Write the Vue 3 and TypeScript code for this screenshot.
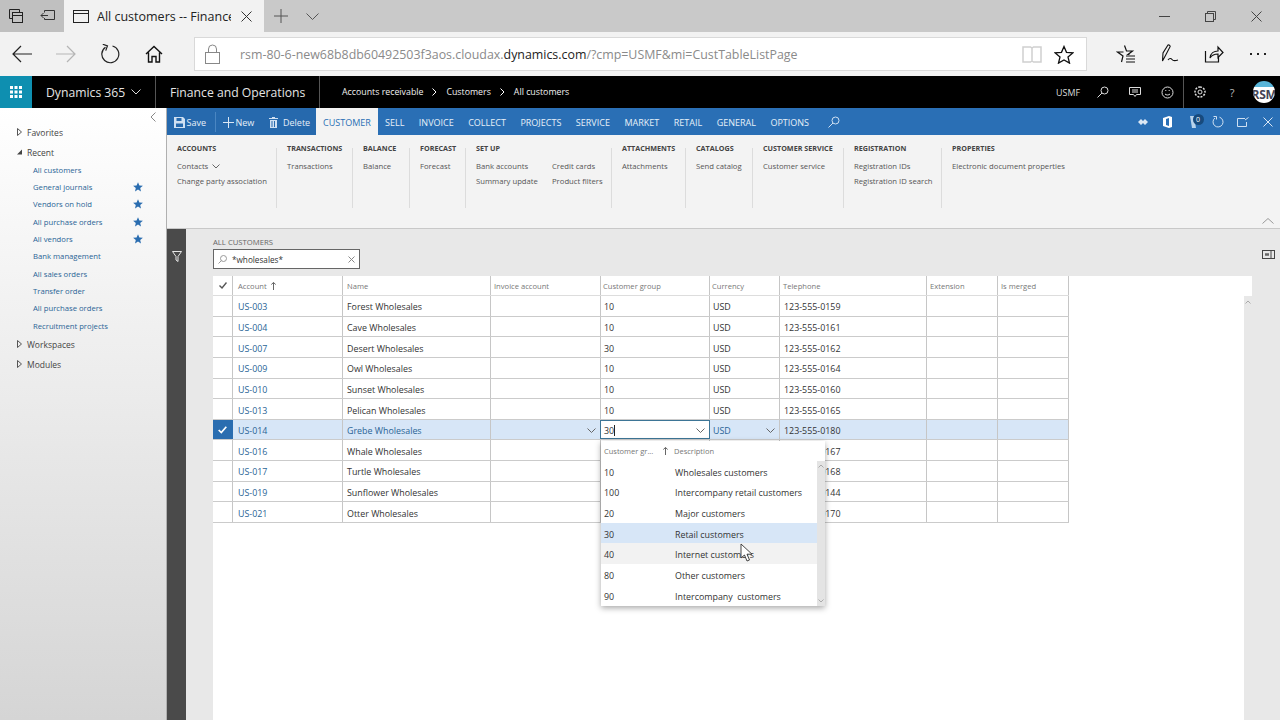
<script setup lang="ts">
const tabs = ['SELL','INVOICE','COLLECT','PROJECTS','SERVICE','MARKET','RETAIL','GENERAL','OPTIONS']
const recent = [
  ['All customers',false],['General journals',true],['Vendors on hold',true],['All purchase orders',true],['All vendors',true],
  ['Bank management',false],['All sales orders',false],['Transfer order',false],['All purchase orders',false],['Recruitment projects',false],
] as [string, boolean][]
const groups: { title: string; cols: string[][] }[] = [
  { title:'ACCOUNTS', cols:[['Contacts','Change party association']] },
  { title:'TRANSACTIONS', cols:[['Transactions']] },
  { title:'BALANCE', cols:[['Balance']] },
  { title:'FORECAST', cols:[['Forecast']] },
  { title:'SET UP', cols:[['Bank accounts','Summary update'],['Credit cards','Product filters']] },
  { title:'ATTACHMENTS', cols:[['Attachments']] },
  { title:'CATALOGS', cols:[['Send catalog']] },
  { title:'CUSTOMER SERVICE', cols:[['Customer service']] },
  { title:'REGISTRATION', cols:[['Registration IDs','Registration ID search']] },
  { title:'PROPERTIES', cols:[['Electronic document properties']] },
]
const heads = ['Account','Name','Invoice account','Customer group','Currency','Telephone','Extension','Is merged']
const rows = [
  ['US-003','Forest Wholesales','10','123-555-0159'],
  ['US-004','Cave Wholesales','10','123-555-0161'],
  ['US-007','Desert Wholesales','30','123-555-0162'],
  ['US-009','Owl Wholesales','10','123-555-0164'],
  ['US-010','Sunset Wholesales','10','123-555-0160'],
  ['US-013','Pelican Wholesales','10','123-555-0165'],
  ['US-014','Grebe Wholesales','30','123-555-0180'],
  ['US-016','Whale Wholesales','10','123-555-0167'],
  ['US-017','Turtle Wholesales','10','123-555-0168'],
  ['US-019','Sunflower Wholesales','10','123-555-0144'],
  ['US-021','Otter Wholesales','10','123-555-0170'],
]
const options = [
  ['10','Wholesales customers'],['100','Intercompany retail customers'],['20','Major customers'],['30','Retail customers'],
  ['40','Internet customers'],['80','Other customers'],['90','Intercompany  customers'],
]
</script>

<template>
  <div class="page">
    <div class="titlebar">
      <div class="tb-cell dark">
        <svg width="16" height="16" viewBox="0 0 16 16" fill="none" stroke="#222"><path d="M1.5 1.5h10v3M1.5 1.5v9h3"/><rect x="4.5" y="4.5" width="10" height="10" fill="#c4c4c4"/><path d="M4.5 7.5h10"/></svg>
      </div>
      <div class="tb-cell dark">
        <svg width="16" height="14" viewBox="0 0 16 14" fill="none" stroke="#333"><path d="M4.5 3.5V1.5h10v9h-10V9"/><path d="M1 6.5h7M3.5 4L1 6.5 3.5 9"/></svg>
      </div>
      <div class="browser-tab">
        <svg width="16" height="13" viewBox="0 0 16 13" fill="none" stroke="#222"><rect x=".5" y=".5" width="15" height="12"/><path d="M.5 3.5h15"/></svg>
        <span class="tab-title">All customers -- Finance and Operations</span>
        <svg width="11" height="11" viewBox="0 0 11 11" stroke="#333" fill="none"><path d="M.5.5l10 10M10.500.5l-10 10"/></svg>
      </div>
      <div class="tb-plus">
        <svg width="14" height="14" viewBox="0 0 14 14" stroke="#555"><path d="M7 0v14M0 7h14"/></svg>
      </div>
      <div class="tb-down">
        <svg width="13" height="7" viewBox="0 0 13 7" fill="none" stroke="#555"><path d="M.5.500l6 6 6-6"/></svg>
      </div>
      <div class="spacer"></div>
      <div class="win-btn"><svg width="11" height="1" viewBox="0 0 11 1"><path d="M0 .5h11" stroke="#444"/></svg></div>
      <div class="win-btn"><svg width="11" height="11" viewBox="0 0 11 11" fill="none" stroke="#444"><path d="M2.500 2.500V.5h8v8h-2"/><rect x=".5" y="2.500" width="8" height="8"/></svg></div>
      <div class="win-btn"><svg width="11" height="11" viewBox="0 0 11 11" stroke="#444"><path d="M.5.5l10 10M10.500.5l-10 10"/></svg></div>
    </div>

    <div class="toolbar">
      <div class="nav-btn"><svg width="20" height="18" viewBox="0 0 20 18" fill="none" stroke="#222" stroke-width="1.200"><path d="M20 9H1M9 1L1 9l8 8"/></svg></div>
      <div class="nav-btn"><svg width="20" height="18" viewBox="0 0 20 18" fill="none" stroke="#b5b5b5" stroke-width="1.200"><path d="M0 9h19M11 1l8 8-8 8"/></svg></div>
      <div class="nav-btn"><svg width="20" height="20" viewBox="0 0 20 20" fill="none" stroke="#222" stroke-width="1.200"><path d="M12.500 2A8.500 8.500 0 1 1 5.500 3.200"/><path d="M2 1.500h5v5" transform="rotate(20 6 3)"/></svg></div>
      <div class="nav-btn"><svg width="18" height="18" viewBox="0 0 18 18" fill="none" stroke="#111" stroke-width="1.400"><path d="M1 9l8-7.500L17 9M3.500 7.500V17H7v-5.500h4V17h3.500V7.500"/></svg></div>
      <div class="address">
        <svg class="lock" width="15" height="20" viewBox="0 0 15 20" fill="none" stroke="#888"><rect x=".5" y="8.500" width="14" height="11"/><path d="M3.500 8.500V5a4 4 0 0 1 8 0v3.500"/></svg>
        <span class="url">rsm-80-6-new68b8db60492503f3aos.cloudax.<b>dynamics.com</b>/?cmp=USMF&amp;mi=CustTableListPage</span>
        <div class="spacer"></div>
        <svg class="book" width="20" height="18" viewBox="0 0 20 18" fill="none" stroke="#d0d0d0" stroke-width="1.500"><path d="M1 2h7.500l1.500 1 1.500-1H19v15h-7.500L10 16l-1.500 1H1zM10 3v13"/></svg>
        <svg class="star" width="20" height="19" viewBox="0 0 20 19" fill="none" stroke="#111" stroke-width="1.300"><path d="M10 1.500l2.500 5.800 6.300.6-4.800 4.100 1.500 6.100L10 14.900l-5.500 3.200L6 12 1.200 7.900l6.300-.6z"/></svg>
      </div>
      <div class="nav-btn first-right"><svg width="20" height="20" viewBox="0 0 20 20" fill="none" stroke="#111" stroke-width="1.200"><path d="M8.500 1.500l2 5.500h6l-4.500 3.500 1.500 0M5.500 18l1.500-6L1.500 8h6"/><path d="M10 12h9M10 15h9M10 18h9"/></svg></div>
      <div class="nav-btn"><svg width="20" height="20" viewBox="0 0 20 20" fill="none" stroke="#111" stroke-width="1.100"><path d="M2.500 17L3 9l5-8c1.200-.3 2 .3 2.200 1.500L6 10.500 2.500 17zM8 16c1.500-2 3-2 4-.5s3 1.500 6 .5"/></svg></div>
      <div class="nav-btn"><svg width="20" height="20" viewBox="0 0 20 20" fill="none" stroke="#111" stroke-width="1.200"><path d="M1.500 7v11h13v-5M6 14c.5-4.500 4-7 8-7V3l5 5.500-5 5V10c-3 0-6 1-8 4z"/></svg></div>
      <div class="nav-btn dots"><i></i><i></i><i></i></div>
    </div>

    <div class="d365">
      <div class="waffle"><svg width="12" height="12" viewBox="0 0 12 12" fill="#fff"><path d="M0 0h3v3H0zM4.500 0h3v3h-3zM9 0h3v3H9zM0 4.500h3v3H0zM4.500 4.500h3v3h-3zM9 4.500h3v3H9zM0 9h3v3H0zM4.500 9h3v3h-3zM9 9h3v3H9z"/></svg></div>
      <div class="brand">
        <span>Dynamics 365</span>
        <svg width="10" height="6" viewBox="0 0 10 6" fill="none" stroke="#ddd"><path d="M.5.5L5 5 9.500.5"/></svg>
      </div>
      <div class="product">Finance and Operations</div>
      <div class="crumbs">
        <span>Accounts receivable</span>
        <svg width="5" height="8" viewBox="0 0 5 8" fill="none" stroke="#fff"><path d="M.5.5L4 4 .5 7.500"/></svg>
        <span>Customers</span>
        <svg width="5" height="8" viewBox="0 0 5 8" fill="none" stroke="#fff"><path d="M.5.5L4 4 .5 7.500"/></svg>
        <span>All customers</span>
      </div>
      <div class="spacer"></div>
      <span class="company">USMF</span>
      <div class="d-ico"><svg width="12" height="12" viewBox="0 0 12 12" fill="none" stroke="#ddd"><circle cx="7.500" cy="4.500" r="3.500"/><path d="M5 7L.5 11.500"/></svg></div>
      <div class="d-ico"><svg width="12" height="12" viewBox="0 0 12 12" fill="none" stroke="#ddd"><path d="M.5 1.500h11v7h-4L6 10.500 4.500 8.500h-4z"/><path d="M3 4h6M3 6h6"/></svg></div>
      <div class="d-ico"><svg width="13" height="13" viewBox="0 0 13 13" fill="none" stroke="#ddd"><circle cx="6.500" cy="6.500" r="5.500"/><path d="M4 8c1.200 1.300 3.800 1.300 5 0M4.300 4.500h1M7.700 4.500h1"/></svg></div>
      <div class="d-sep d-ico"><svg width="12" height="12" viewBox="0 0 12 12" fill="none" stroke="#ddd"><circle cx="6" cy="6" r="2"/><path stroke-width="1.500" stroke-dasharray="2 1.200" d="M6 1a5 5 0 1 1 0 10A5 5 0 1 1 6 1z"/></svg></div>
      <div class="d-ico help">?</div>
      <div class="avatar"><span>RSM</span></div>
    </div>

    <div class="workspace">
      <aside class="sidebar">
        <svg class="collapse" width="6" height="10" viewBox="0 0 6 10" fill="none" stroke="#888"><path d="M5.500.5L1 5l4.500 4.500"/></svg>
        <div class="side-head"><svg class="tri" width="5" height="8" viewBox="0 0 5 8" fill="none" stroke="#555"><path d="M.5.5L4.500 4 .5 7.500z"/></svg>Favorites</div>
        <div class="side-head"><svg class="tri" width="6" height="6" viewBox="0 0 6 6" fill="#444"><path d="M6 0v6H0z"/></svg>Recent</div>
        <div v-for="(r, i) in recent" :key="i" class="side-link">
          <span>{{ r[0] }}</span>
          <svg v-if="r[1]" width="10" height="10" viewBox="0 0 10 10" fill="#2a6db0"><path d="M5 .2l1.400 3.200 3.500.3-2.700 2.300.8 3.400L5 7.600 2 9.400l.8-3.400L.1 3.700l3.500-.3z"/></svg>
        </div>
        <div class="side-head"><svg class="tri" width="5" height="8" viewBox="0 0 5 8" fill="none" stroke="#555"><path d="M.5.5L4.500 4 .5 7.500z"/></svg>Workspaces</div>
        <div class="side-head"><svg class="tri" width="5" height="8" viewBox="0 0 5 8" fill="none" stroke="#555"><path d="M.5.5L4.500 4 .5 7.500z"/></svg>Modules</div>
      </aside>

      <div class="form">
        <div class="actionbar">
          <div class="actions">
            <span class="act save">
              <svg width="11" height="11" viewBox="0 0 11 11" fill="#cfe0f2"><path d="M0 0h9l2 2v9H0zM2.500 1v3h5V1zM2 6.500V10h7V6.500z"/></svg>Save
            </span>
            <span class="act new">
              <svg width="11" height="11" viewBox="0 0 11 11" stroke="#dbe7f4"><path d="M5.500 0v11M0 5.500h11"/></svg>New
            </span>
            <span class="act del">
              <svg width="9" height="11" viewBox="0 0 9 11" fill="#cfe0f2"><path d="M3 0h3v1h3v1H0V1h3zM1 3h7v8H1zM2.500 4v6h1V4zM5 4v6h1V4z"/></svg>Delete
            </span>
          </div>
          <div class="tab-on">CUSTOMER</div>
          <div class="tabs">
            <span v-for="t in tabs" :key="t">{{ t }}</span>
            <svg class="tab-search" width="12" height="12" viewBox="0 0 12 12" fill="none" stroke="#cfe0f2"><circle cx="7.500" cy="4.500" r="3.500"/><path d="M5 7L.5 11.500"/></svg>
          </div>
          <div class="spacer"></div>
          <div class="bar-icons">
            <svg width="10" height="6" viewBox="0 0 10 6" fill="#dbe7f4"><path d="M3 0l3 3-3 3-3-3zM7 0l3 3-3 3-3-3z"/></svg>
            <svg width="9" height="12" viewBox="0 0 9 12" fill="#fff"><path d="M0 2l6-2 3 1v10l-3 1-6-2zM3 3v6l3 1V2z"/></svg>
            <span class="notif">
              <svg width="6" height="12" viewBox="0 0 6 12" fill="#b9d3ec"><path d="M0 0h4l2 12H2z"/></svg>
              <b>0</b>
            </span>
            <svg width="12" height="12" viewBox="0 0 12 12" fill="none" stroke="#cfe0f2"><path d="M7.500 1.200A5 5 0 1 1 3 2M1.500 .5h3v3"/></svg>
            <svg width="12" height="10" viewBox="0 0 12 10" fill="none" stroke="#cfe0f2"><path d="M8 1.500H.5v8h9V5M8 3l3.500-2.500"/></svg>
            <svg width="10" height="10" viewBox="0 0 10 10" stroke="#dbe7f4"><path d="M.5.5l9 9M9.500.5l-9 9"/></svg>
          </div>
        </div>

        <div class="ribbon">
          <div v-for="g in groups" :key="g.title" class="r-group">
            <div class="r-title">{{ g.title }}</div>
            <div class="r-cols">
              <div v-for="(c, i) in g.cols" :key="i" class="r-col">
                <div v-for="it in c" :key="it" class="r-item">
                  {{ it }}
                  <svg v-if="it === 'Contacts'" width="8" height="5" viewBox="0 0 8 5" fill="none" stroke="#666"><path d="M.5.5L4 4 7.500.5"/></svg>
                </div>
              </div>
            </div>
          </div>
          <svg class="r-collapse" width="12" height="6" viewBox="0 0 12 6" fill="none" stroke="#999"><path d="M.5 5.500L6 .5l5.500 5"/></svg>
        </div>

        <div class="body">
          <div class="filter-strip">
            <svg width="10" height="11" viewBox="0 0 10 11" fill="none" stroke="#e8e8e8"><path d="M.5.5h9L6 5.500v5l-2-1.500V5.500z"/></svg>
          </div>
          <div class="main">
            <div class="crumb-title">ALL CUSTOMERS</div>
            <div class="search">
              <svg width="9" height="9" viewBox="0 0 9 9" fill="none" stroke="#999"><circle cx="5.500" cy="3.500" r="3"/><path d="M3.500 5.500L.5 8.500"/></svg>
              <span>*wholesales*</span>
              <div class="spacer"></div>
              <svg width="7" height="7" viewBox="0 0 7 7" stroke="#888"><path d="M.5.5l6 6M6.500.5l-6 6"/></svg>
            </div>
            <div class="panel">
              <div class="grid">
                <div class="row head">
                  <div class="cell check-cell"><svg width="8" height="7" viewBox="0 0 8 7" fill="none" stroke="#555" stroke-width="1.400"><path d="M.5 3.500L3 6l4.500-5.500"/></svg></div>
                  <div v-for="(h, i) in heads" :key="h" class="cell">
                    {{ h }}
                    <svg v-if="i === 0" class="sort" width="5" height="8" viewBox="0 0 5 8" fill="none" stroke="#666"><path d="M2.500 8V.5M.3 2.500L2.500.5l2.200 2"/></svg>
                  </div>
                </div>
                <div v-for="r in rows" :key="r[0]" class="row body-row" :class="{ sel: r[0] === 'US-014' }">
                  <div class="cell check-cell">
                    <svg v-if="r[0] === 'US-014'" width="9" height="8" viewBox="0 0 9 8" fill="none" stroke="#fff" stroke-width="1.700"><path d="M.7 4L3.300 6.500 8.300.8"/></svg>
                  </div>
                  <div class="cell link">{{ r[0] }}</div>
                  <div class="cell" :class="{ link: r[0] === 'US-014' }">{{ r[1] }}</div>
                  <div class="cell">
                    <svg v-if="r[0] === 'US-014'" class="chev" width="9" height="5" viewBox="0 0 9 5" fill="none" stroke="#666"><path d="M.5.5L4.500 4.500 8.500.5"/></svg>
                  </div>
                  <div class="cell" :class="{ active: r[0] === 'US-014' }">
                    <template v-if="r[0] === 'US-014'">
                      <span class="typed">30</span>
                      <svg class="chev" width="9" height="5" viewBox="0 0 9 5" fill="none" stroke="#666"><path d="M.5.5L4.500 4.500 8.500.5"/></svg>
                      <div class="dropdown">
                        <div class="dd-head">
                          <span class="dd-a">Customer gr...</span>
                          <svg width="5" height="8" viewBox="0 0 5 8" fill="none" stroke="#666"><path d="M2.500 8V.5M.3 2.500L2.500.5l2.200 2"/></svg>
                          <span class="dd-b">Description</span>
                        </div>
                        <div class="dd-body">
                          <div class="dd-rows">
                            <div v-for="o in options" :key="o[0]" class="dd-row" :class="{ on: o[0] === '30', hover: o[0] === '40' }">
                              <span class="dd-k">{{ o[0] }}</span><span class="dd-v">{{ o[1] }}</span>
                            </div>
                          </div>
                          <div class="dd-scroll">
                            <svg width="6" height="4" viewBox="0 0 6 4" fill="none" stroke="#aaa"><path d="M.5 3.500L3 1l2.500 2.500"/></svg>
                            <svg width="6" height="4" viewBox="0 0 6 4" fill="none" stroke="#aaa"><path d="M.5.500L3 3 5.500.5"/></svg>
                          </div>
                        </div>
                        <svg class="cursor" width="13" height="19" viewBox="0 0 13 19" fill="#fff" stroke="#333" stroke-width=".9"><path d="M1 1v14l3.500-3 2.500 6 2.500-1-2.500-5.800H12z"/></svg>
                      </div>
                    </template>
                    <template v-else>{{ r[2] }}</template>
                  </div>
                  <div class="cell" :class="{ link: r[0] === 'US-014' }">
                    USD
                    <svg v-if="r[0] === 'US-014'" class="chev" width="9" height="5" viewBox="0 0 9 5" fill="none" stroke="#666"><path d="M.5.5L4.500 4.500 8.500.5"/></svg>
                  </div>
                  <div class="cell">{{ r[3] }}</div>
                  <div class="cell"></div>
                  <div class="cell"></div>
                </div>
              </div>
              <div class="spacer"></div>
              <div class="v-scroll">
                <svg width="6" height="4" viewBox="0 0 6 4" fill="none" stroke="#aaa"><path d="M.5 3.500L3 1l2.500 2.500"/></svg>
              </div>
            </div>
          </div>
          <div class="rail">
            <svg width="13" height="9" viewBox="0 0 13 9" fill="none" stroke="#444"><rect x=".5" y=".5" width="12" height="8"/><path d="M9 .5v8"/><path d="M3 4.500h4" stroke-width="2.500" stroke="#666"/></svg>
          </div>
        </div>
      </div>
    </div>
  </div>
</template>

<style>
html, body { margin: 0; overflow: hidden; }
</style>

<style scoped>
.page { width: 1280px; height: 720px; display: flex; flex-direction: column; overflow: hidden; font-family: "Open Sans", "Noto Sans", sans-serif; color: #333; }
.spacer { flex: 1; }
svg { flex: none; display: block; }

.titlebar { height: 32px; display: flex; align-items: center; background: #c9c9c9; flex: none; }
.tb-cell { width: 32px; height: 32px; display: flex; align-items: center; justify-content: center; }
.tb-cell.dark { background: #c0c0c0; }
.browser-tab { width: 200px; height: 32px; background: #f2f2f2; display: flex; align-items: center; padding-left: 9px; box-sizing: border-box; }
.tab-title { width: 134px; margin-left: 8px; margin-right: 10px; font-size: 12.5px; white-space: nowrap; overflow: hidden; color: #222; }
.tb-plus { width: 34px; display: flex; justify-content: center; }
.tb-down { width: 28px; display: flex; justify-content: center; }
.win-btn { width: 46px; height: 32px; display: flex; align-items: center; justify-content: center; }
.win-btn:last-child { margin-right: 1px; }

.toolbar { height: 44px; flex: none; background: #f2f2f2; display: flex; align-items: center; }
.nav-btn { width: 44px; height: 44px; display: flex; align-items: center; justify-content: center; }
.address { width: 893px; height: 34px; margin-left: 18px; box-sizing: border-box; background: #fff; border: 1px solid #d9d9d9; display: flex; align-items: center; padding-left: 10px; }
.url { margin-left: 20px; font-size: 12.4px; color: #8a8a8a; white-space: nowrap; }
.url b { font-weight: 400; color: #222; }
.book { margin-right: 12px; }
.star { margin-right: 12px; }
.first-right { margin-left: 17px; }
.dots { gap: 5px; }
.dots i { width: 2px; height: 2px; background: #222; }

.d365 { height: 32px; flex: none; background: #000; color: #fff; display: flex; align-items: center; }
.waffle { width: 32px; height: 32px; background: #0e8fb0; display: flex; align-items: center; justify-content: center; }
.brand { width: 124px; height: 32px; box-sizing: border-box; padding-left: 14px; gap: 6px; display: flex; align-items: center; border-right: 1px solid #555; font-size: 12.2px; color: #e4e4e4; white-space: nowrap; }
.product { width: 164px; height: 32px; box-sizing: border-box; padding-left: 14px; border-right: 1px solid #555; display: flex; align-items: center; font-size: 12.2px; color: #e4e4e4; white-space: nowrap; }
.crumbs { margin-left: 22px; display: flex; align-items: center; gap: 9px; font-size: 8.800px; color: #f0f0f0; white-space: nowrap; }
.company { font-size: 8.900px; color: #ddd; margin-right: 7px; }
.d-ico { width: 32px; height: 32px; display: flex; align-items: center; justify-content: center; }
.d-sep { width: 33px; box-sizing: border-box; border-left: 1px solid #555; }
.help { font-size: 11px; color: #bbb; margin-right: 6px; }
.avatar { width: 22px; height: 22px; border-radius: 50%; margin: 0 5px 0 -1px; overflow: hidden; background: linear-gradient(#58b4d8 0 28%, #fff 28%); color: #445; font-size: 12px; font-weight: 700; display: flex; align-items: center; justify-content: center; }
.avatar span { letter-spacing: -.3px; white-space: nowrap; margin-top: 4px; }

.workspace { flex: 1; display: flex; min-height: 0; }
.sidebar { width: 167px; flex: none; box-sizing: border-box; border-right: 1px solid #b0b0b0; background: linear-gradient(#fff, #d5d5d5); position: relative; padding-top: 14px; }
.collapse { position: absolute; left: 150px; top: 4px; }
.side-head { height: 20px; display: flex; align-items: center; font-size: 8.500px; color: #444; padding-left: 17px; gap: 5px; }
.side-head .tri { width: 5px; }
.side-link { height: 17.350px; display: flex; align-items: center; justify-content: space-between; padding: 0 23px 0 33px; font-size: 7.700px; color: #2a6496; white-space: nowrap; }
.side-head + .side-link { margin-top: -1px; }

.form { flex: 1; display: flex; flex-direction: column; min-width: 0; }
.actionbar { height: 27px; flex: none; background: #2a6fb5; display: flex; align-items: stretch; color: #e6eff8; font-size: 9px; white-space: nowrap; }
.actionbar > * { padding-top: 1px; box-sizing: border-box; }
.actions { width: 149px; flex: none; display: flex; align-items: center; background: #2669ad; padding-left: 7px; }
.act { display: flex; align-items: center; gap: 1.500px; }
.act.save { width: 41px; border-right: 1px solid #4a86c2; height: 20px; margin-right: 7px; }
.act.new { width: 46px; }
.act.del { gap: 5px; }
.tab-on { width: 62px; flex: none; background: #f3f3f3; color: #2a6fb5; display: flex; align-items: center; justify-content: center; }
.tabs { display: flex; align-items: center; gap: 14.500px; padding-left: 7px; }
.tab-search { margin-left: 4px; }
.bar-icons { display: grid; grid-template-columns: repeat(6, 25px); justify-items: center; align-items: center; }
.notif { display: block; position: relative; width: 6px; }
.notif b { position: absolute; left: 3px; top: -2px; width: 11px; height: 11px; border-radius: 50%; background: #174a7d; color: #fff; font-size: 7px; font-weight: 400; text-align: center; line-height: 11px; }

.ribbon { height: 94px; flex: none; box-sizing: border-box; background: #f3f3f3; border-bottom: 1px solid #c8c8c8; display: grid; grid-template-columns: 110px 76px 57px 56px 146px 74px 67px 91px 98px 1fr; position: relative; padding-top: 7px; }
.r-group { padding-left: 10px; position: relative; white-space: nowrap; }
.r-group::after { content: ""; position: absolute; right: 0; top: 6px; height: 60px; width: 1px; background: #dcdcdc; }
.r-group:last-of-type::after { display: none; }
.r-title { font-size: 7.200px; line-height: 12px; font-weight: 700; color: #444; }
.r-cols { display: flex; margin-top: 5px; }
.r-col { width: 76px; flex: none; }
.r-col:only-child { width: auto; }
.r-item { font-size: 7.700px; line-height: 15px; color: #555; display: flex; align-items: center; gap: 4px; }
.r-collapse { position: absolute; right: 6px; bottom: 4px; }

.body { flex: 1; display: flex; background: #e8e8e8; min-height: 0; }
.filter-strip { width: 19px; flex: none; background: #4a4a4a; display: flex; justify-content: center; padding-top: 22px; box-sizing: border-box; }
.main { flex: 1; padding: 8px 0 0 27px; min-width: 0; display: flex; flex-direction: column; }
.crumb-title { font-size: 7.700px; line-height: 11px; color: #666; }
.search { width: 147px; height: 20px; margin-top: 1px; box-sizing: border-box; border: 1px solid #666; background: #fff; display: flex; align-items: center; padding: 0 4px; font-size: 8.200px; color: #333; gap: 5px; }
.panel { margin-top: 7px; flex: 1; background: #fff; display: flex; min-height: 0; }
.grid { width: 856px; flex: none; }
.row { display: grid; grid-template-columns: 20px 110px 148px 110px 109px 70px 147px 71px 71px; height: 20.650px; box-sizing: border-box; border-bottom: 1px solid #cbcbcb; }
.row.head { height: 20px; border-bottom-color: #ddd; }
.cell { box-sizing: border-box; border-right: 1px solid #c6c6c6; padding-left: 3px; font-size: 8.900px; display: flex; align-items: center; white-space: nowrap; color: #333; position: relative; min-width: 0; }
.body-row .cell:not(.check-cell) { padding-top: 2px; }
.head .cell { font-size: 7.600px; color: #777; }
.sort { margin-left: 4px; }
.check-cell { padding: 0; justify-content: center; }
.link { color: #2a6496; }
.row .cell:nth-child(2) { padding-left: 5px; }
.row .cell:nth-child(3) { padding-left: 4px; }
.body-row .cell:nth-child(7) { padding-left: 4px; }
.head .cell:nth-child(5), .head .cell:nth-child(6) { padding-left: 2px; }
.sel { background: #d7e6f7; }
.sel .check-cell { background: #2a6db0; border-right-color: #2a6db0; }
.chev { position: absolute; right: 4px; top: 8px; }
.active { background: #fff; margin-left: -1px; padding-left: 4px; outline: 1px solid #3d7596; outline-offset: -1px; z-index: 2; }
.typed { border-right: 1px solid #222; line-height: 11px; }
.dropdown { position: absolute; left: 1px; top: 21px; width: 224px; height: 165px; background: #fff; box-shadow: 0 2px 6px rgba(0,0,0,.35); z-index: 5; }
.dd-head { height: 20px; display: flex; align-items: center; font-size: 7.500px; color: #777; padding-left: 3px; }
.dd-a { width: 59px; }
.dd-b { margin-left: 6px; }
.dd-body { display: flex; height: 145px; }
.dd-rows { width: 216px; }
.dd-row { height: 20.670px; box-sizing: border-box; padding-top: 2px; display: flex; align-items: center; font-size: 8.900px; color: #333; white-space: pre; }
.dd-row.on { background: #d7e6f7; }
.dd-row.hover { background: #f2f2f2; }
.dd-k { width: 74px; padding-left: 3px; box-sizing: border-box; }
.dd-scroll { width: 8px; background: #e4e4e4; display: flex; flex-direction: column; justify-content: space-between; align-items: center; padding: 3px 0; box-sizing: border-box; }
.cursor { position: absolute; left: 139px; top: 102px; }
.v-scroll { width: 8px; margin-top: 20px; background: #e8e8e8; display: flex; justify-content: center; padding-top: 4px; box-sizing: border-box; }
.rail { width: 28px; flex: none; display: flex; justify-content: center; padding-top: 21px; padding-left: 5px; box-sizing: border-box; }
</style>
